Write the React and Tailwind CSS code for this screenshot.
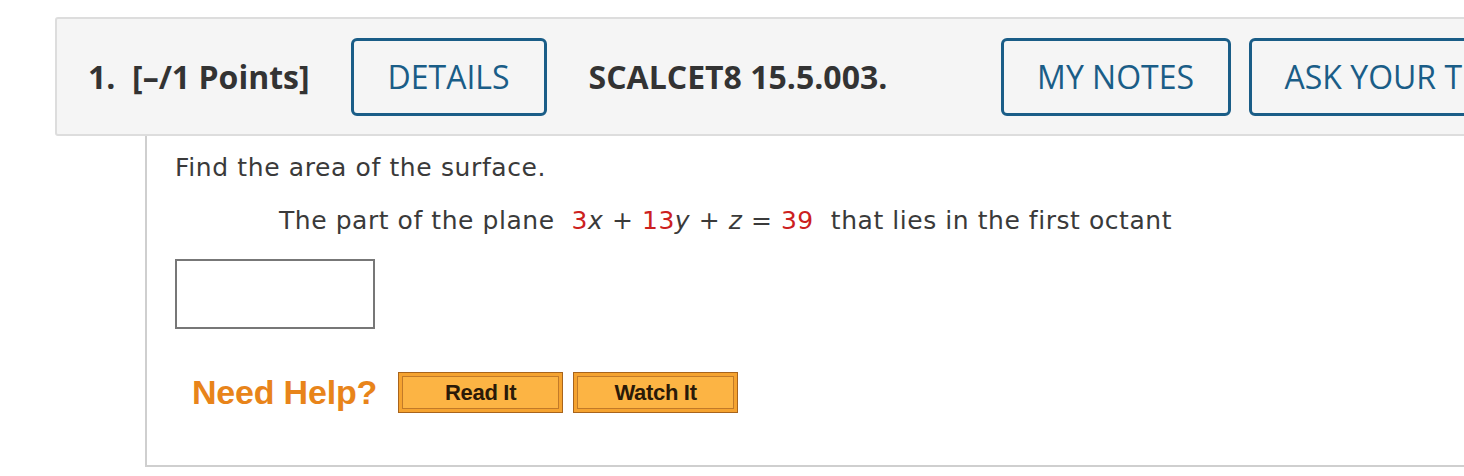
export default function App() {
  const os = { fontFamily: '"Open Sans", "Liberation Sans", sans-serif' };
  const vd = { fontFamily: '"DejaVu Sans", Verdana, sans-serif' };
  const ar = { fontFamily: '"Liberation Sans", Arial, sans-serif' };
  return (
    <div className="w-[1464px] h-[476px] bg-white overflow-hidden">
      <div className="pt-[17px] pl-[55px]">
        <div
          className="w-[1500px] h-[119px] bg-[#f5f5f5] border-2 border-[#dddddd] rounded-[3px] flex items-center pl-[31px] text-[32px] text-[#333333]"
          style={os}
        >
          <span className="font-bold whitespace-pre">1.  [–/1 Points]</span>
          <div className="ml-[41px] h-[78px] w-[196px] border-[3px] border-[#1a5d87] rounded-[6px] flex items-center justify-center text-[#1a5d87]">
            DETAILS
          </div>
          <span className="ml-[42px] w-[297px] font-bold whitespace-nowrap">SCALCET8 15.5.003.</span>
          <div className="ml-[115px] h-[78px] w-[230px] border-[3px] border-[#1a5d87] rounded-[6px] flex items-center justify-center text-[#1a5d87]">
            MY NOTES
          </div>
          <div className="ml-[18px] h-[78px] w-[300px] border-[3px] border-[#1a5d87] rounded-[6px] flex items-center pl-[33px] text-[#1a5d87] whitespace-nowrap overflow-hidden">
            ASK YOUR TEACHER
          </div>
        </div>
      </div>
      <div className="ml-[145px] w-[1400px] h-[331px] border-l-2 border-b-2 border-[#cfcfcf] pl-[28px] pt-[14px] text-[#3a3a3a]" style={vd}>
        <p className="text-[25px] leading-[36px] tracking-[0.62px]">Find the area of the surface.</p>
        <p className="text-[25px] leading-[36px] mt-[17px] pl-[104px] whitespace-pre tracking-[0.55px]">
          {"The part of the plane  "}
          <span className="text-[#cc2020]">3</span>
          <span className="italic">x</span>
          {" + "}
          <span className="text-[#cc2020]">13</span>
          <span className="italic">y</span>
          {" + "}
          <span className="italic">z</span>
          {" = "}
          <span className="text-[#cc2020]">39</span>
          {"  that lies in the first octant"}
        </p>
        <div className="mt-[20px] w-[200px] h-[70px] border-2 border-[#777777] bg-white"></div>
        <div className="mt-[38px] flex items-center pl-[17px]" style={ar}>
          <span className="text-[34px] font-bold text-[#e8841a] tracking-[-0.2px]">Need Help?</span>
          <div className="ml-[21px] w-[165px] h-[41px] border border-[#a8641c] bg-[#f5a330] p-[3px]">
            <div className="w-full h-full border border-[#c27a28] bg-[#fcb444] flex items-center justify-center text-[22px] font-bold text-[#2a1a08] tracking-[-0.3px]">
              Read It
            </div>
          </div>
          <div className="ml-[10px] w-[165px] h-[41px] border border-[#a8641c] bg-[#f5a330] p-[3px]">
            <div className="w-full h-full border border-[#c27a28] bg-[#fcb444] flex items-center justify-center text-[22px] font-bold text-[#2a1a08] tracking-[-0.3px]">
              Watch It
            </div>
          </div>
        </div>
      </div>
    </div>
  );
}
